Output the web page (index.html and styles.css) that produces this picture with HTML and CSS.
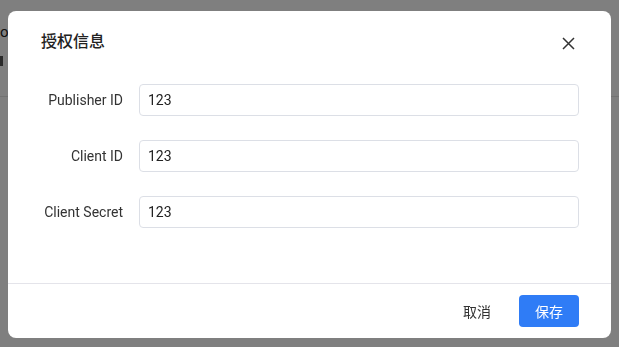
FILE: index.html
```html
<!DOCTYPE html>
<html lang="zh-CN">
<head>
    <meta charset="UTF-8">
    <meta name="viewport" content="width=device-width, initial-scale=1.0">
    <title>授权信息</title>
    <link rel="stylesheet" href="styles.css">
</head>
<body>

<div class="page">
    <div class="page-header">
        <div class="page-title">ob</div>
        <div class="page-sub"></div>
    </div>
</div>

<div class="mask">
    <div class="dialog">
        <div class="dialog-header">
            <span class="dialog-title">授权信息</span>
            <button class="dialog-close" type="button" aria-label="关闭">
                <svg width="13" height="13" viewBox="0 0 13 13">
                    <path d="M1 1 L12 12 M12 1 L1 12" stroke="#333" stroke-width="1.5" fill="none"/>
                </svg>
            </button>
        </div>

        <form class="dialog-body">
            <div class="form-row">
                <label for="publisher_id">Publisher ID</label>
                <input type="text" id="publisher_id" value="123">
            </div>
            <div class="form-row">
                <label for="client_id">Client ID</label>
                <input type="text" id="client_id" value="123">
            </div>
            <div class="form-row">
                <label for="client_secret">Client Secret</label>
                <input type="text" id="client_secret" value="123">
            </div>
        </form>

        <div class="dialog-footer">
            <button class="btn" type="button">取消</button>
            <button class="btn btn-primary" type="button">保存</button>
        </div>
    </div>
</div>

</body>
</html>
```

FILE: styles.css
```css
* {
    box-sizing: border-box;
}
body {
    margin: 0;
    font-family: Roboto, "Noto Sans CJK SC", sans-serif;
    color: #333;
    background: #fff;
    width: 619px;
    height: 347px;
    overflow: hidden;
}
.page-header {
    height: 97px;
    border-bottom: 1px solid #e4e4e4;
    padding: 23px 0 0;
}
.page-title {
    font-size: 15px;
    color: #222;
}
.page-sub {
    margin-top: 15px;
    width: 3px;
    height: 10px;
    background: #555;
}
.mask {
    position: fixed;
    inset: 0;
    background: rgba(0, 0, 0, 0.5);
    padding: 11px 8px 0;
}
.dialog {
    background: #fff;
    border-radius: 8px;
    width: 603px;
    height: 327px;
    display: flex;
    flex-direction: column;
}
.dialog-header {
    height: 58px;
    padding: 0 36px 0 33px;
    display: flex;
    align-items: center;
    justify-content: space-between;
}
.dialog-title {
    font-size: 16px;
    font-weight: 500;
    color: #222;
}
.dialog-close {
    border: none;
    background: none;
    padding: 0;
    margin-top: 6px;
    width: 14px;
    height: 14px;
    display: flex;
    align-items: center;
    justify-content: center;
    cursor: pointer;
}
.dialog-body {
    flex: 1;
    padding: 15px 32px 0;
    display: flex;
    flex-direction: column;
    gap: 24px;
}
.form-row {
    display: flex;
    align-items: center;
    gap: 16px;
}
.form-row label {
    width: 83px;
    text-align: right;
    font-size: 14px;
    color: #333;
    white-space: nowrap;
}
.form-row input {
    flex: 1;
    height: 32px;
    border: 1px solid #dcdfe6;
    border-radius: 4px;
    padding: 0 8px;
    font-family: inherit;
    font-size: 14px;
    color: #222;
    outline: none;
}
.dialog-footer {
    height: 55px;
    border-top: 1px solid #e4e4ea;
    padding: 0 32px;
    display: flex;
    align-items: center;
    justify-content: flex-end;
    gap: 12px;
}
.btn {
    width: 60px;
    height: 32px;
    border: none;
    border-radius: 4px;
    background: none;
    font-family: inherit;
    font-size: 14px;
    color: #333;
    cursor: pointer;
}
.btn-primary {
    background: #2f7cf6;
    color: #fff;
}
```
